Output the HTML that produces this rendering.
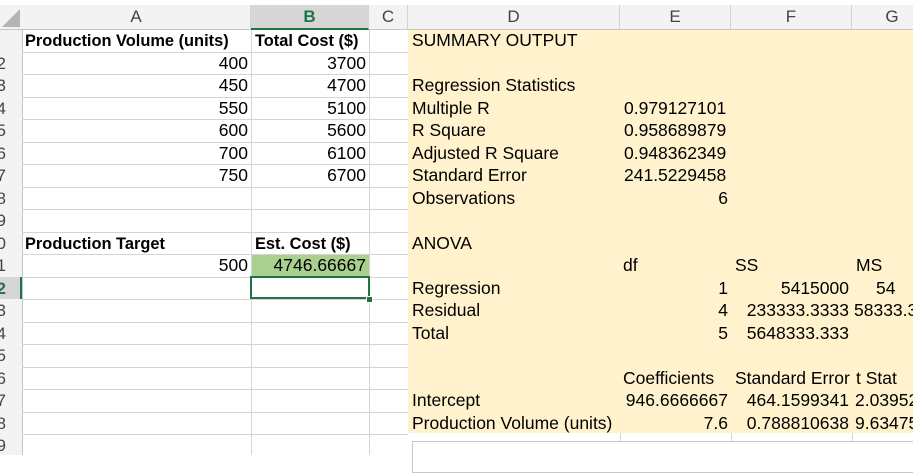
<!DOCTYPE html>
<html><head><meta charset="utf-8"><style>
body{margin:0;width:913px;height:455px;overflow:hidden;background:#fff;font-family:"Liberation Sans",Arial,sans-serif;font-size:17.5px;color:#000;position:relative}
.a{position:absolute}
.c{position:absolute;height:22px;line-height:23px;white-space:nowrap;overflow:hidden}
.b{font-weight:bold;font-size:16.4px}
.r{text-align:right}
.h{position:absolute;height:1px;background:#d4d4d4}
.v{position:absolute;width:1px;background:#d4d4d4}
.ch{position:absolute;top:5px;height:24px;line-height:24px;text-align:center;color:#444;font-size:17px;border-right:1px solid #d4d4d4}
.rn{position:absolute;left:-24px;width:30px;text-align:right;color:#444;height:22px;line-height:24px;font-size:17px}
</style></head><body>
<div class="a" style="left:0;top:5px;width:913px;height:24px;background:#f3f3f3;border-bottom:1px solid #c6c6c6"></div>
<div class="a" style="left:0;top:5px;width:22px;height:24px;overflow:hidden"><div style="position:absolute;right:2px;bottom:2px;width:0;height:0;border-left:18px solid transparent;border-bottom:18px solid #b4b4b4"></div></div>
<div class="ch" style="left:22px;width:228px">A</div>
<div class="ch" style="left:251px;width:117px;background:#d6d6d6;color:#217346;font-weight:bold;border-bottom:2px solid #217346;height:23px">B</div>
<div class="ch" style="left:369px;width:38px">C</div>
<div class="ch" style="left:408px;width:211px">D</div>
<div class="ch" style="left:620px;width:110px">E</div>
<div class="ch" style="left:731px;width:120px">F</div>
<div class="ch" style="left:852px;width:80px">G</div>
<div class="a" style="left:0;top:30px;width:22px;height:425px;background:#f3f3f3;border-right:1px solid #c6c6c6;overflow:hidden">
<div class="rn" style="top:22px">2</div><div class="rn" style="top:44px">3</div><div class="rn" style="top:67px">4</div><div class="rn" style="top:89px">5</div><div class="rn" style="top:112px">6</div><div class="rn" style="top:134px">7</div><div class="rn" style="top:157px">8</div><div class="rn" style="top:179px">9</div><div class="rn" style="top:202px">10</div><div class="rn" style="top:224px">11</div><div class="a" style="top:247px;left:0;width:22px;height:22px;background:#d6d6d6;border-right:2px solid #217346;box-sizing:border-box"></div><div class="rn" style="top:247px;color:#217346;font-weight:bold">12</div><div class="rn" style="top:269px">13</div><div class="rn" style="top:292px">14</div><div class="rn" style="top:314px">15</div><div class="rn" style="top:337px">16</div><div class="rn" style="top:359px">17</div><div class="rn" style="top:382px">18</div><div class="rn" style="top:404px">19</div>
</div>
<div class="h" style="left:22px;width:386px;top:52px"></div>
<div class="h" style="left:22px;width:386px;top:74px"></div>
<div class="h" style="left:22px;width:386px;top:97px"></div>
<div class="h" style="left:22px;width:386px;top:119px"></div>
<div class="h" style="left:22px;width:386px;top:142px"></div>
<div class="h" style="left:22px;width:386px;top:164px"></div>
<div class="h" style="left:22px;width:386px;top:187px"></div>
<div class="h" style="left:22px;width:386px;top:209px"></div>
<div class="h" style="left:22px;width:386px;top:232px"></div>
<div class="h" style="left:22px;width:386px;top:254px"></div>
<div class="h" style="left:22px;width:386px;top:277px"></div>
<div class="h" style="left:22px;width:386px;top:299px"></div>
<div class="h" style="left:22px;width:386px;top:322px"></div>
<div class="h" style="left:22px;width:386px;top:344px"></div>
<div class="h" style="left:22px;width:386px;top:367px"></div>
<div class="h" style="left:22px;width:386px;top:389px"></div>
<div class="h" style="left:22px;width:386px;top:412px"></div>
<div class="h" style="left:22px;width:386px;top:434px"></div>
<div class="v" style="left:251px;top:30px;height:425px"></div>
<div class="v" style="left:369px;top:30px;height:425px"></div>
<div class="v" style="left:620px;top:433px;height:22px"></div>
<div class="v" style="left:731px;top:433px;height:22px"></div>
<div class="v" style="left:852px;top:433px;height:22px"></div>
<div class="a" style="left:408px;top:30px;width:505px;height:403px;background:#fff2cc"></div>
<div class="a" style="left:412px;top:441px;width:510px;height:30px;background:#fff;border:1px solid #c8c8c8"></div>
<div class="a" style="left:252px;top:255px;width:117px;height:22px;background:#a9d08e"></div>
<div class="a" style="left:250px;top:276px;width:120px;height:23px;border:2px solid #217346;box-sizing:border-box"></div>
<div class="a" style="left:366px;top:296px;width:5px;height:5px;background:#217346;border:1px solid #fff"></div>
<div class="c b" style="left:25px;top:30px">Production Volume (units)</div>
<div class="c b" style="left:255px;top:30px">Total Cost ($)</div>
<div class="c r" style="left:22px;width:226px;top:52px">400</div><div class="c r" style="left:251px;width:115px;top:52px">3700</div>
<div class="c r" style="left:22px;width:226px;top:74px">450</div><div class="c r" style="left:251px;width:115px;top:74px">4700</div>
<div class="c r" style="left:22px;width:226px;top:97px">550</div><div class="c r" style="left:251px;width:115px;top:97px">5100</div>
<div class="c r" style="left:22px;width:226px;top:119px">600</div><div class="c r" style="left:251px;width:115px;top:119px">5600</div>
<div class="c r" style="left:22px;width:226px;top:142px">700</div><div class="c r" style="left:251px;width:115px;top:142px">6100</div>
<div class="c r" style="left:22px;width:226px;top:164px">750</div><div class="c r" style="left:251px;width:115px;top:164px">6700</div>
<div class="c b" style="left:25px;top:233px">Production Target</div>
<div class="c b" style="left:255px;top:233px">Est. Cost ($)</div>
<div class="c r" style="left:22px;width:226px;top:254px">500</div><div class="c r" style="left:251px;width:115px;top:254px">4746.66667</div>
<div class="c" style="left:412px;top:29px">SUMMARY OUTPUT</div>
<div class="c" style="left:412px;top:74px">Regression Statistics</div>
<div class="c" style="left:412px;top:97px">Multiple R</div><div class="c" style="left:624px;top:97px">0.979127101</div>
<div class="c" style="left:412px;top:119px">R Square</div><div class="c" style="left:624px;top:119px">0.958689879</div>
<div class="c" style="left:412px;top:142px">Adjusted R Square</div><div class="c" style="left:624px;top:142px">0.948362349</div>
<div class="c" style="left:412px;top:164px">Standard Error</div><div class="c" style="left:624px;top:164px">241.5229458</div>
<div class="c" style="left:412px;top:187px">Observations</div><div class="c r" style="left:620px;width:108px;top:187px">6</div>
<div class="c" style="left:412px;top:232px">ANOVA</div>
<div class="c" style="left:623px;top:254px">df</div><div class="c" style="left:735px;top:254px">SS</div><div class="c" style="left:856px;top:254px">MS</div>
<div class="c" style="left:412px;top:277px">Regression</div><div class="c r" style="left:620px;width:108px;top:277px">1</div><div class="c r" style="left:731px;width:118px;top:277px">5415000</div><div class="c" style="left:876px;top:277px">54</div>
<div class="c" style="left:412px;top:299px">Residual</div><div class="c r" style="left:620px;width:108px;top:299px">4</div><div class="c r" style="left:731px;width:118px;top:299px">233333.3333</div><div class="c" style="left:854px;width:59px;top:299px">58333.3</div>
<div class="c" style="left:412px;top:322px">Total</div><div class="c r" style="left:620px;width:108px;top:322px">5</div><div class="c r" style="left:731px;width:118px;top:322px">5648333.333</div>
<div class="c" style="left:623px;top:367px">Coefficients</div><div class="c" style="left:735px;top:367px">Standard Error</div><div class="c" style="left:856px;top:367px">t Stat</div>
<div class="c" style="left:412px;top:389px">Intercept</div><div class="c r" style="left:620px;width:108px;top:389px">946.6666667</div><div class="c r" style="left:731px;width:118px;top:389px">464.1599341</div><div class="c" style="left:855px;width:58px;top:389px">2.03952</div>
<div class="c" style="left:412px;top:412px">Production Volume (units)</div><div class="c r" style="left:620px;width:108px;top:412px">7.6</div><div class="c r" style="left:731px;width:118px;top:412px">0.788810638</div><div class="c" style="left:855px;width:58px;top:412px">9.63475</div>
</body></html>
